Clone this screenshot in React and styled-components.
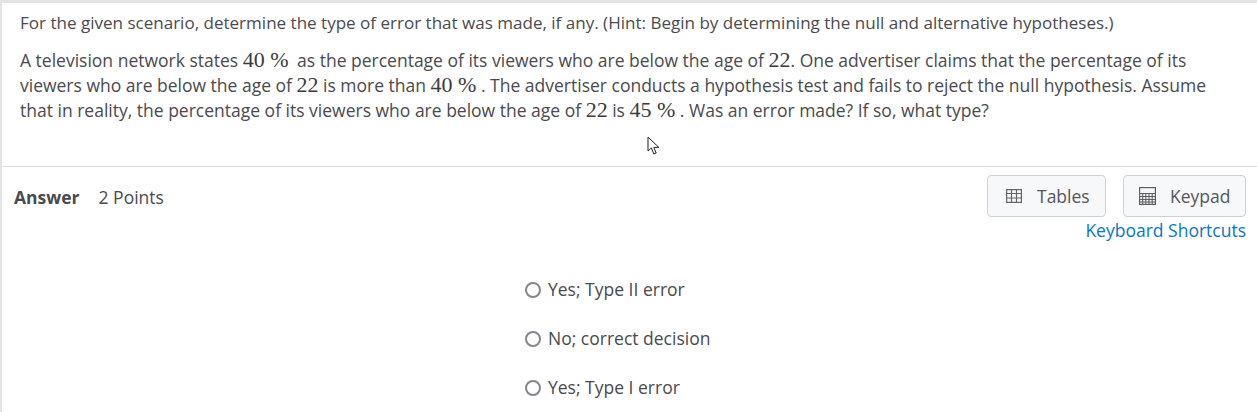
import React from 'react'
import styled, { createGlobalStyle } from 'styled-components'

const GlobalStyle = createGlobalStyle`
  html, body { margin: 0; padding: 0; background: #fff; overflow: hidden; }
  body { font-family: 'Open Sans', sans-serif; color: #4a4a4f; }
`

const Page = styled.div`
  position: relative;
  box-sizing: border-box;
  width: 1257px;
  height: 412px;
  overflow: hidden;
  border-top: 3px solid #e4e4e4;
  border-left: 2px solid #e4e4e4;
`

const Question = styled.section`
  box-sizing: border-box;
  height: 164px;
  padding: 7px 30px 0 18px;
  border-bottom: 1px solid #dedede;
`

const Intro = styled.p`
  margin: 0 0 13px;
  font-size: 17.05px;
  line-height: 25px;
  white-space: nowrap;
`

const Scenario = styled.p`
  margin: 0;
  font-size: 17.5px;
  line-height: 25px;
  white-space: nowrap;
`

const Math = styled.span`
  font-family: 'Liberation Serif', serif;
  font-size: 22px;
  line-height: 20px;
  color: #3c3c40;
  margin-right: ${p => p.$gap || 0}px;
`

const Cursor = styled.svg`
  position: absolute;
  left: 645px;
  top: 133px;
`

const AnswerBar = styled.header`
  display: flex;
  justify-content: space-between;
  align-items: flex-start;
  padding: 8px 11px 0 12px;
`

const AnswerTitle = styled.div`
  display: flex;
  gap: 19px;
  padding-top: 10px;
  font-size: 17.5px;
  line-height: 24px;
`

const Strong = styled.strong`
  font-weight: 700;
`

const Tools = styled.div`
  display: flex;
  flex-direction: column;
  align-items: flex-end;
  gap: 1px;
`

const Buttons = styled.div`
  display: flex;
  gap: 17px;
`

const ToolButton = styled.button`
  display: flex;
  align-items: center;
  gap: ${p => p.$gap}px;
  box-sizing: border-box;
  width: ${p => p.$width}px;
  height: 42px;
  padding: 0 0 0 ${p => p.$pad}px;
  border: 1px solid #ccd2da;
  border-radius: 4px;
  background: #f7f8fa;
  color: #55565b;
  font-family: 'Open Sans', sans-serif;
  font-size: 17.5px;
`

const ShortcutLink = styled.a`
  color: #0a77c2;
  font-size: 17.5px;
  line-height: 24px;
  text-decoration: none;
`

const Choices = styled.div`
  display: flex;
  flex-direction: column;
  gap: 25px;
  margin: 35px 0 0 523px;
`

const Choice = styled.label`
  display: flex;
  align-items: center;
  gap: 7px;
  font-size: 17.5px;
  line-height: 24px;
`

const Radio = styled.span`
  box-sizing: border-box;
  width: 16px;
  height: 16px;
  margin-top: 1px;
  border: 2px solid #85858f;
  border-radius: 50%;
  background: #fff;
`

const TableIcon = () => (
  <svg width="16" height="14" viewBox="0 0 16 14" fill="none" stroke="#66666a" strokeWidth="1.2">
    <rect x="0.6" y="0.6" width="14.8" height="12.8" />
    <path d="M0.6 4.5H15.4M0.6 9H15.4M5.5 0.6V13.4M10.5 0.6V13.4" />
  </svg>
)

const KeypadIcon = () => (
  <svg width="17" height="18" viewBox="0 0 17 18" fill="none">
    <rect x="0.6" y="0.6" width="15.8" height="16.8" stroke="#5f5f63" strokeWidth="1.2" />
    <path d="M1 6.5H16M1 9.5H16M1 12.5H16M1 15H16M3.7 6V17M6.8 6V17M10 6V17M13.2 6V17" stroke="#5f5f63" strokeWidth="1.1" />
  </svg>
)

export default function App() {
  return (
    <Page>
      <GlobalStyle />
      <Question>
        <Intro>
          For the given scenario, determine the type of error that was made, if any. (Hint: Begin by determining the null and alternative hypotheses.)
        </Intro>
        <Scenario>
          A television network states <Math $gap={4}>40 %</Math> as the percentage of its viewers who are below the age of <Math>22</Math>. One advertiser claims that the percentage of its
          <br />
          viewers who are below the age of <Math>22</Math> is more than <Math>40 %</Math> . The advertiser conducts a hypothesis test and fails to reject the null hypothesis. Assume
          <br />
          that in reality, the percentage of its viewers who are below the age of <Math>22</Math> is <Math>45 %</Math> . Was an error made? If so, what type?
        </Scenario>
      </Question>
      <Cursor width="14" height="20" viewBox="0 0 14 20">
        <path d="M1 1V15L4.4 12L6.8 18L9.2 17L6.8 11.4H11.8Z" fill="#fff" stroke="#222" strokeWidth="1" />
      </Cursor>
      <AnswerBar>
        <AnswerTitle>
          <Strong>Answer</Strong>
          <span>2 Points</span>
        </AnswerTitle>
        <Tools>
          <Buttons>
            <ToolButton $width={119} $pad={18} $gap={15}><TableIcon />Tables</ToolButton>
            <ToolButton $width={123} $pad={15} $gap={14}><KeypadIcon />Keypad</ToolButton>
          </Buttons>
          <ShortcutLink href="#">Keyboard Shortcuts</ShortcutLink>
        </Tools>
      </AnswerBar>
      <Choices>
        <Choice><Radio />Yes; Type II error</Choice>
        <Choice><Radio />No; correct decision</Choice>
        <Choice><Radio />Yes; Type I error</Choice>
      </Choices>
    </Page>
  )
}
